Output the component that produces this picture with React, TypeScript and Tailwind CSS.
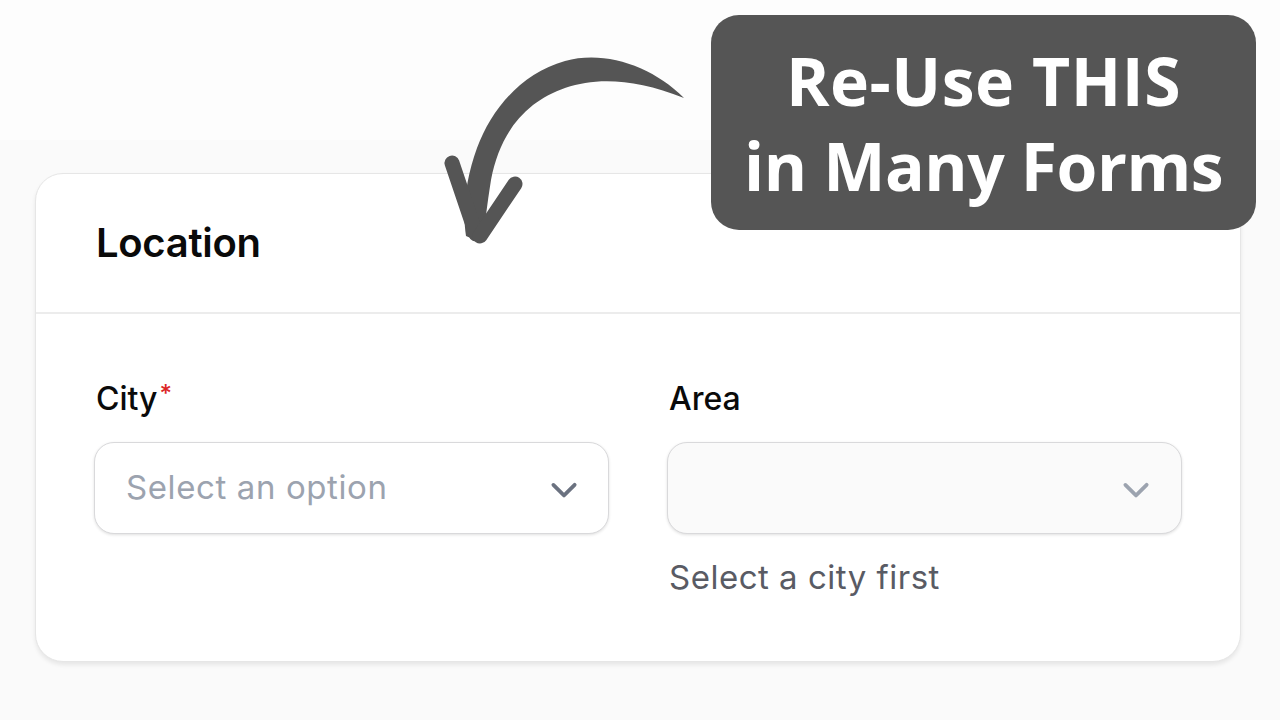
import React from "react";

function Chevron({ color }: { color: string }) {
  return (
    <svg width="50" height="50" viewBox="0 0 20 20" fill={color} aria-hidden="true">
      <path
        fillRule="evenodd"
        d="M5.22 8.22a.75.75 0 0 1 1.06 0L10 11.94l3.72-3.72a.75.75 0 1 1 1.06 1.06l-4.25 4.25a.75.75 0 0 1-1.06 0L5.22 9.28a.75.75 0 0 1 0-1.06Z"
        clipRule="evenodd"
      />
    </svg>
  );
}

function Arrow() {
  return (
    <svg
      className="absolute left-0 top-0 pointer-events-none"
      width="1280"
      height="300"
      viewBox="0 0 1280 300"
      aria-hidden="true"
    >
      <path
        d="M684 98 C652 66 605 50 565 61 C522 73 492 108 477 148 C466 178 462 210 466 236 L482 243 C485 225 487 205 491 180 C497 148 511 122 533 105 C566 80 615 70 684 98 Z"
        fill="#555555"
      />
      <line x1="452" y1="163" x2="476" y2="234" stroke="#555555" strokeWidth="15" strokeLinecap="round" />
      <line x1="515" y1="184" x2="480" y2="236" stroke="#555555" strokeWidth="15" strokeLinecap="round" />
    </svg>
  );
}

export default function App() {
  const inter = { fontFamily: "Inter, 'Noto Sans', sans-serif" };
  return (
    <div className="relative w-[1280px] h-[720px] overflow-hidden bg-[#fafafa]" style={inter}>
      <div className="flex flex-col h-full">
        <div className="h-[140px] bg-[#fdfdfd] shrink-0" />
        <div className="flex-1 px-[35px] pt-[33px]">
          <div className="w-[1206px] rounded-[28px] border border-[#e6e6e6] bg-white shadow-[0_3px_4px_rgba(0,0,0,0.08)]">
            <div className="h-[140px] flex items-center px-[60px] border-b-2 border-[#ececec]">
              <h2 className="text-[40px] leading-[48px] font-semibold text-[#0a0a0a] tracking-[-0.3px]">Location</h2>
            </div>
            <div className="grid grid-cols-2 gap-[58px] px-[58px] pt-[61px] pb-[60px]">
              <div className="flex flex-col">
                <label className="text-[32px] leading-[48px] font-medium text-[#0a0a0a] pl-[2px]">
                  City<sup className="text-[#dc2626] font-medium text-[24px] ml-[2px] relative top-[-8px]">*</sup>
                </label>
                <div className="mt-[19px] h-[92px] rounded-[20px] border border-[#d9d9db] bg-white shadow-[0_1px_3px_rgba(0,0,0,0.12)] flex items-center justify-between pl-[31px] pr-[19px]">
                  <span className="text-[33px] tracking-[0.6px] text-[#9ca3af]">Select an option</span>
                  <Chevron color="#6b7280" />
                </div>
              </div>
              <div className="flex flex-col">
                <label className="text-[32px] leading-[48px] font-medium text-[#0a0a0a] pl-[2px]">Area</label>
                <div className="mt-[19px] h-[92px] rounded-[20px] border border-[#d9d9db] bg-[#fafafa] shadow-[0_1px_3px_rgba(0,0,0,0.12)] flex items-center justify-end pr-[20px]">
                  <Chevron color="#9ca3af" />
                </div>
                <p className="mt-[19px] text-[33px] tracking-[0.5px] leading-[48px] text-[#595b64] pl-[2px]">Select a city first</p>
              </div>
            </div>
          </div>
        </div>
      </div>

      <Arrow />

      <div
        className="absolute left-[711px] top-[15px] w-[545px] h-[215px] rounded-[28px] bg-[#555555] flex items-center justify-center"
        style={{ fontFamily: "'Open Sans', 'Noto Sans', sans-serif" }}
      >
        <div className="text-white font-bold text-[66px] leading-[85px] text-center">
          <div className="tracking-[0.5px]">Re-Use THIS</div>
          <div className="tracking-[-0.5px]">in Many Forms</div>
        </div>
      </div>
    </div>
  );
}
